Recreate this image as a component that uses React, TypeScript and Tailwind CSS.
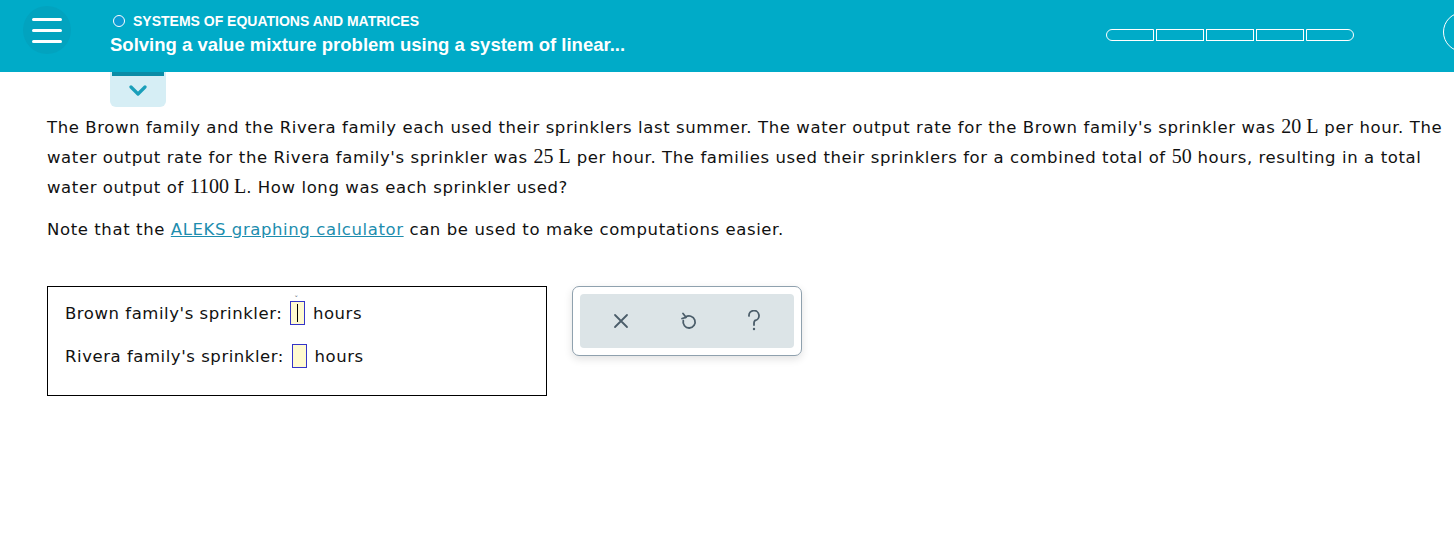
import React from 'react';

const M: React.FC<{ children: React.ReactNode }> = ({ children }) => (
  <span className="font-['Liberation_Serif',serif] text-[20px] leading-none tracking-normal">{children}</span>
);

const AnswerInput: React.FC<{ active?: boolean }> = ({ active }) => (
  <span className="relative inline-block align-middle w-[15px] h-[24px] border border-[#3535c8] bg-[#fffad0] mx-[2px] -mt-[4px]">
    {active && (
      <>
        <span className="absolute left-[6px] top-[2px] w-[1px] h-[18px] bg-black" />
        <span className="absolute left-[3px] -top-[5px] text-[8px] leading-none text-gray-500">ˇ</span>
      </>
    )}
  </span>
);

const App: React.FC = () => {
  return (
    <div className="w-[1454px] h-[546px] bg-white overflow-hidden font-['DejaVu_Sans',sans-serif]">
      {/* top bar */}
      <div className="h-[72px] bg-[#00abc8] flex items-center relative">
        <div className="ml-[23px] w-[48px] h-[48px] rounded-full bg-[#02a3bf] flex flex-col items-center justify-center gap-[8px] -mt-[12px]">
          <span className="block w-[30px] h-[3px] bg-white rounded" />
          <span className="block w-[30px] h-[3px] bg-white rounded" />
          <span className="block w-[30px] h-[3px] bg-white rounded" />
        </div>
        <div className="ml-[39px] -mt-[3px] text-white font-['Liberation_Sans',sans-serif]">
          <div className="flex items-center gap-[8px] ml-[3px]">
            <span className="w-[12px] h-[12px] rounded-full border border-white bg-[#1e88e5]/40" />
            <span className="text-[14px] font-bold leading-none">SYSTEMS OF EQUATIONS AND MATRICES</span>
          </div>
          <div className="text-[18.5px] font-bold leading-none mt-[8px]">
            Solving a value mixture problem using a system of linear...
          </div>
        </div>
        <div className="ml-auto mr-[100px] -mt-[2px] flex gap-[2px]">
          <span className="w-[48px] h-[12px] border-[1.5px] border-white rounded-l-full" />
          <span className="w-[48px] h-[12px] border-[1.5px] border-white" />
          <span className="w-[48px] h-[12px] border-[1.5px] border-white" />
          <span className="w-[48px] h-[12px] border-[1.5px] border-white" />
          <span className="w-[48px] h-[12px] border-[1.5px] border-white rounded-r-full" />
        </div>
        <span className="absolute left-[1443px] top-[12px] w-[40px] h-[40px] rounded-full border-[1.5px] border-white" />
      </div>

      {/* chevron tab */}
      <div className="ml-[110px] w-[56px] h-[35px] bg-[#d6eef5] rounded-b-[6px] flex items-center justify-center relative">
        <span className="absolute top-0 left-[2px] right-[2px] h-[4px] bg-[#0b8ca6]" />
        <svg width="20" height="12" viewBox="0 0 20 12" className="mt-[2px]">
          <path d="M3 2 L10 9 L17 2" fill="none" stroke="#1a9fba" strokeWidth="3.2" strokeLinecap="round" strokeLinejoin="round" />
        </svg>
      </div>

      {/* question */}
      <div className="pl-[47px] pr-[8px] pt-[6px] text-[16.5px] tracking-[0.6px] text-[#111]">
        <p className="leading-[30px]">
          The Brown family and the Rivera family each used their sprinklers last summer. The water output rate for the Brown family's sprinkler was <M>20 L</M> per hour. The water output rate for the Rivera family's sprinkler was <M>25 L</M> per hour. The families used their sprinklers for a combined total of <M>50</M> hours, resulting in a total water output of <M>1100 L</M>. How long was each sprinkler used?
        </p>
        <p className="mt-[12px] leading-[30px]">
          Note that the <span className="text-[#1d8dae] underline">ALEKS graphing calculator</span> can be used to make computations easier.
        </p>

        <div className="mt-[41px] flex items-start gap-[25px]">
          <div className="w-[500px] h-[110px] border border-black px-[17px] pt-[13px] tracking-[0.55px]">
            <div className="leading-[28px]">
              Brown family's sprinkler: <AnswerInput active /> hours
            </div>
            <div className="leading-[28px] mt-[15px]">
              Rivera family's sprinkler: <AnswerInput /> hours
            </div>
          </div>
          <div className="w-[230px] h-[70px] border border-[#8fa1ae] rounded-[7px] bg-white p-[7px] shadow-[0_3px_8px_rgba(0,0,0,0.12)]">
            <div className="h-full bg-[#dce4e7] rounded-[4px] flex items-center justify-around px-[8px]">
              <svg width="18" height="18" viewBox="0 0 18 18">
                <path d="M3 3 L15 15 M15 3 L3 15" stroke="#4b5d6a" strokeWidth="1.8" strokeLinecap="round" />
              </svg>
              <svg width="18" height="20" viewBox="0 0 18 20">
                <path d="M6.5 6.2 A6 6 0 1 1 4.3 9.5" fill="none" stroke="#4b5d6a" strokeWidth="1.8" strokeLinecap="round" />
                <path d="M4 2.5 L7 6.3 L3 7.5" fill="none" stroke="#4b5d6a" strokeWidth="1.8" strokeLinecap="round" strokeLinejoin="round" />
              </svg>
              <svg width="16" height="22" viewBox="0 0 16 22">
                <path d="M3 6 A5 5 0 1 1 9 10.5 Q8 11.5 8 13 V15" fill="none" stroke="#4b5d6a" strokeWidth="1.8" strokeLinecap="round" />
                <circle cx="8" cy="19" r="1.2" fill="#4b5d6a" />
              </svg>
            </div>
          </div>
        </div>
      </div>
    </div>
  );
};

export default App;
